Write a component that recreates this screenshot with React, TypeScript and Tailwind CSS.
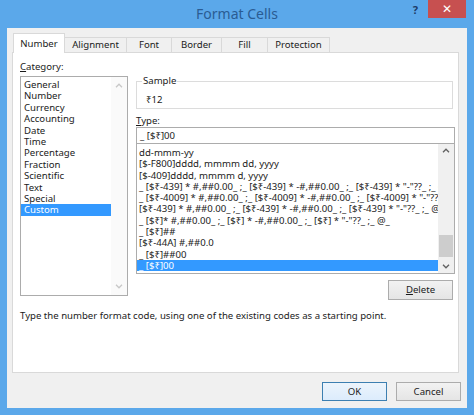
import React from 'react'

const categories = [
  'General',
  'Number',
  'Currency',
  'Accounting',
  'Date',
  'Time',
  'Percentage',
  'Fraction',
  'Scientific',
  'Text',
  'Special',
  'Custom',
]

const formats = [
  'dd-mmm-yy',
  '[$-F800]dddd, mmmm dd, yyyy',
  '[$-409]dddd, mmmm d, yyyy',
  '_ [$₹-439] * #,##0.00_ ;_ [$₹-439] * -#,##0.00_ ;_ [$₹-439] * "-"??_ ;_ @_',
  '_ [$₹-4009] * #,##0.00_ ;_ [$₹-4009] * -#,##0.00_ ;_ [$₹-4009] * "-"??_ ;_ @_',
  '[$₹-439] * #,##0.00_ ;_ [$₹-439] * -#,##0.00_ ;_ [$₹-439] * "-"??_ ;_ @_',
  '_ [$₹]* #,##0.00_ ;_ [$₹] * -#,##0.00_ ;_ [$₹] * "-"??_ ;_ @_',
  '_ [$₹]##',
  '[$₹-44A] #,##0.0',
  '_ [$₹]##00',
  '_ [$₹]00',
]

const tabs = [
  { label: 'Number', w: 'w-[52px]' },
  { label: 'Alignment', w: 'w-[62px]' },
  { label: 'Font', w: 'w-[45px]' },
  { label: 'Border', w: 'w-[50px]' },
  { label: 'Fill', w: 'w-[46px]' },
  { label: 'Protection', w: 'w-[62px]' },
]

function Chevron({ up, color }: { up?: boolean; color: string }) {
  return (
    <svg width="8" height="5" viewBox="0 0 8 5">
      <path
        d={up ? 'M1 4.2 L4 1.2 L7 4.2' : 'M1 0.8 L4 3.8 L7 0.8'}
        fill="none"
        stroke={color}
        strokeWidth="1.3"
      />
    </svg>
  )
}

export default function App() {
  return (
    <div className="w-[474px] h-[415px] bg-[#5ba8ea] flex flex-col font-['Noto_Sans',sans-serif] text-[9.6px] leading-[12px] text-[#1b1b1b]">
      {/* title bar */}
      <div className="h-[28px] grid grid-cols-[1fr_auto_1fr] items-start">
        <div />
        <div className="pt-[6px] text-[14px] leading-[16px] text-[#2a5c93]">Format Cells</div>
        <div className="flex justify-end items-start pr-[8px]">
          <span className="mt-[4px] mr-[10px] text-[11px] font-bold text-[#1d3b66]">?</span>
          <div className="w-[38px] h-[18px] bg-[#c75050] flex items-center justify-center text-white text-[12px]">
            ✕
          </div>
        </div>
      </div>

      {/* dialog body */}
      <div className="mx-[7px] h-[380px] bg-[#f0f0f0] flex flex-col">
        <div className="pl-[6px] pt-[5px] flex items-end h-[24px]">
          {tabs.map((t, i) =>
            i === 0 ? (
              <div
                key={t.label}
                className={`${t.w} h-[20px] -mb-px relative z-10 bg-white border border-b-0 border-[#d9d9d9] flex items-center justify-center`}
              >
                {t.label}
              </div>
            ) : (
              <div
                key={t.label}
                className={`${t.w} h-[15px] bg-[#f0f0f0] border border-l-0 border-b-0 border-[#d9d9d9] flex items-center justify-center text-[#1b1b1b]`}
              >
                {t.label}
              </div>
            )
          )}
        </div>

        {/* tab panel */}
        <div className="ml-[5px] mr-[8px] h-[321px] bg-white border border-[#d9d9d9] pl-[7px] pr-[3px] pt-[8px] flex flex-col">
          <div className="flex gap-[8px]">
            {/* category column */}
            <div className="w-[108px] shrink-0 flex flex-col">
              <div>
                <span className="underline">C</span>ategory:
              </div>
              <div className="mt-[3px] h-[220px] border border-[#acacac] bg-white flex">
                <div className="flex-1 pt-[2px]">
                  {categories.map(c =>
                    c === 'Custom' ? (
                      <div key={c} className="h-[11.4px] leading-[11.4px] bg-[#3399ff] text-white pl-[3px]">
                        {c}
                      </div>
                    ) : (
                      <div key={c} className="h-[11.4px] leading-[11.4px] pl-[3px]">
                        {c}
                      </div>
                    )
                  )}
                </div>
                <div className="w-[16px] bg-[#fafafa] flex flex-col items-center justify-between py-[6px]">
                  <Chevron up color="#c8c8c8" />
                  <Chevron color="#c8c8c8" />
                </div>
              </div>
            </div>

            {/* right column */}
            <div className="flex-1 min-w-0 flex flex-col">
              <div className="relative mt-[20px] mr-[2px] h-[28px] border border-[#dcdcdc]">
                <span className="absolute -top-[7px] left-[5px] bg-white px-[1px]">Sample</span>
                <div className="pt-[12px] pl-[9px]">₹12</div>
              </div>
              <div className="mt-[6px]">
                <span className="underline">T</span>ype:
              </div>
              <div className="h-[17px] border border-[#acacac] pl-[3px] leading-[15px]">_ [$₹]00</div>
              <div className="h-[130px] border border-t-0 border-[#acacac] flex">
                <div className="flex-1 min-w-0 overflow-hidden pt-[3px]">
                  {formats.map((f, i) =>
                    i === formats.length - 1 ? (
                      <div key={i} className="h-[11.3px] leading-[11.3px] bg-[#3399ff] text-white pl-[2px] whitespace-nowrap">
                        {f}
                      </div>
                    ) : (
                      <div key={i} className="h-[11.3px] leading-[11.3px] pl-[2px] whitespace-nowrap">
                        {f}
                      </div>
                    )
                  )}
                </div>
                <div className="w-[16px] shrink-0 bg-[#f0f0f0] flex flex-col items-center py-[4px]">
                  <Chevron up color="#606060" />
                  <div className="flex-1" />
                  <div className="w-[14px] h-[22px] bg-[#cdcdcd] mb-[7px]" />
                  <Chevron color="#606060" />
                </div>
              </div>
              <button className="self-end mt-[6px] mr-[2px] w-[65px] h-[20px] border border-[#acacac] bg-gradient-to-b from-[#f2f2f2] to-[#e5e5e5]">
                <span className="underline">D</span>elete
              </button>
            </div>
          </div>
          <div className="mt-[10px]">
            Type the number format code, using one of the existing codes as a starting point.
          </div>
        </div>

        {/* buttons */}
        <div className="mt-[9px] flex justify-end gap-[9px] pr-[6px]">
          <button className="w-[65px] h-[19px] border border-[#3c7fb1] bg-gradient-to-b from-[#ecf4fc] to-[#dcecfc]">
            OK
          </button>
          <button className="w-[65px] h-[19px] border border-[#acacac] bg-gradient-to-b from-[#f2f2f2] to-[#e5e5e5]">
            Cancel
          </button>
        </div>
      </div>
    </div>
  )
}
